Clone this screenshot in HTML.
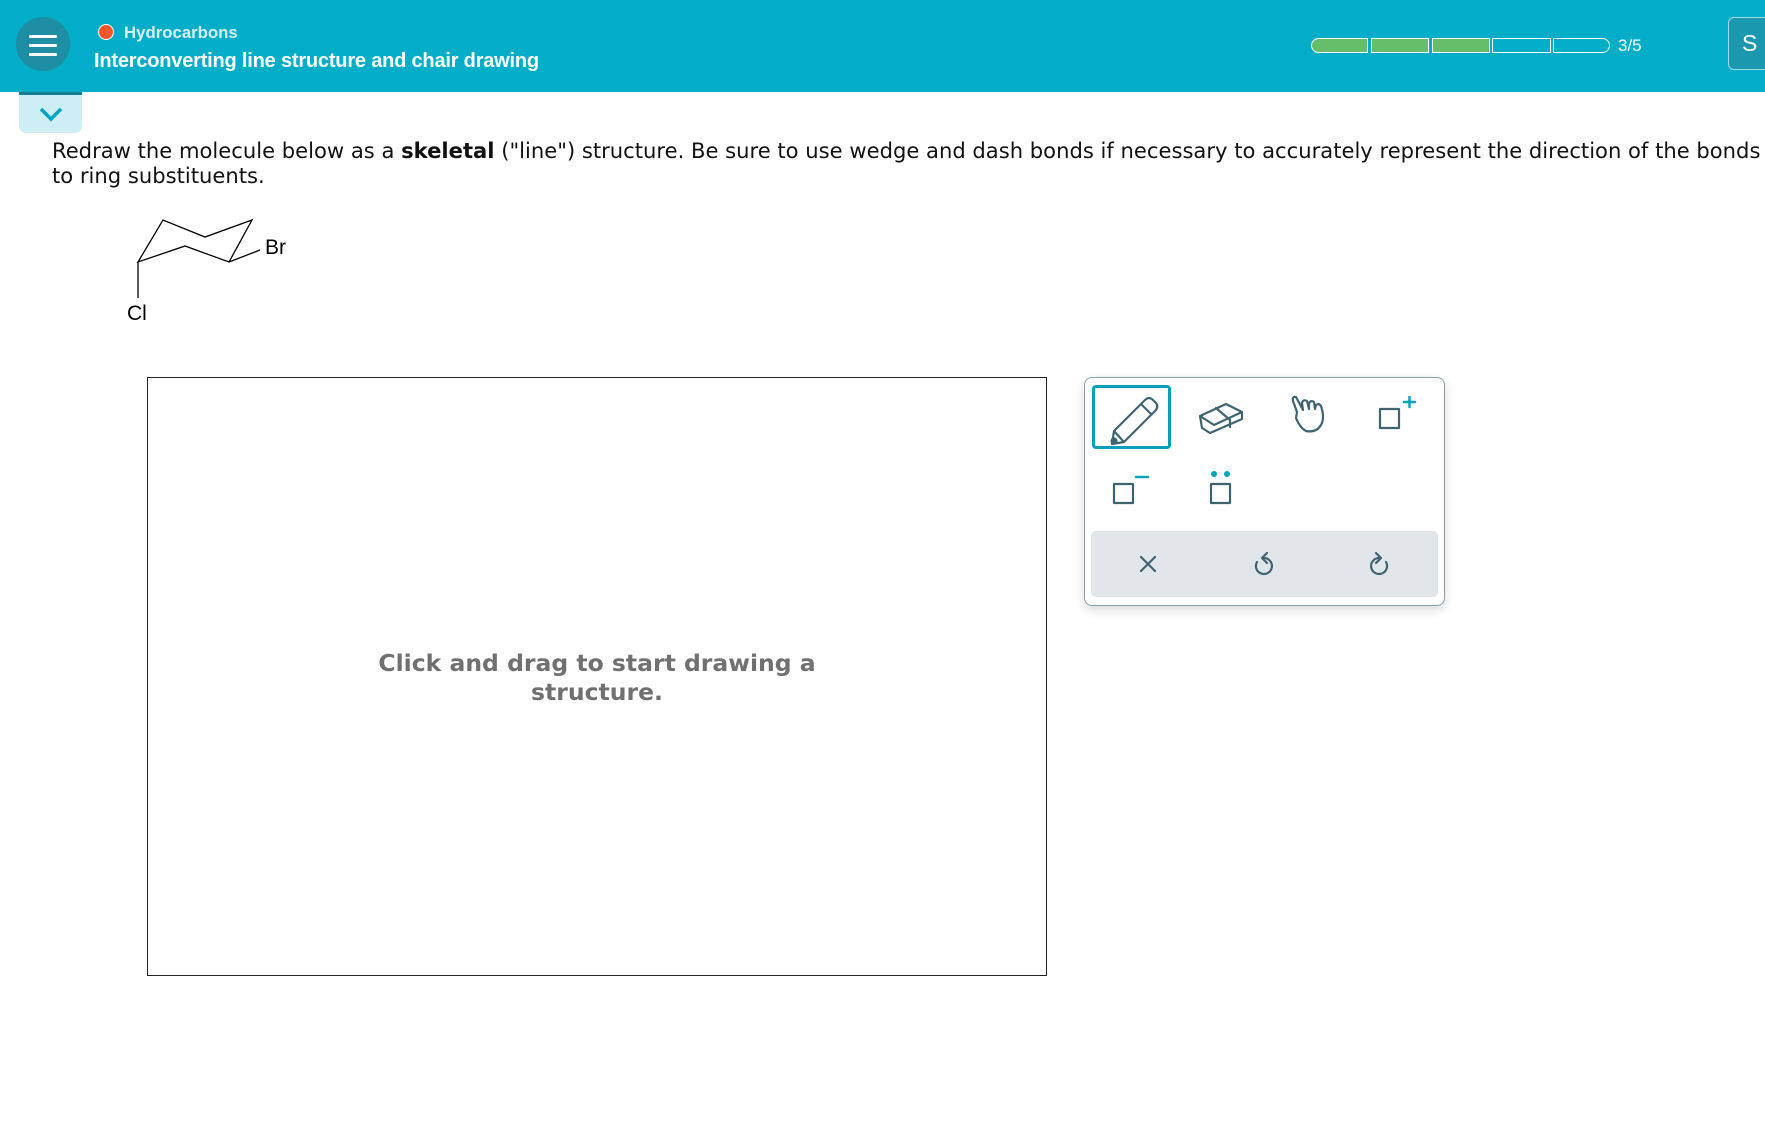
<!DOCTYPE html>
<html><head><meta charset="utf-8"><style>
*{margin:0;padding:0;box-sizing:border-box}
body{width:1765px;height:1140px;background:#fff;position:relative;overflow:hidden;font-family:"Liberation Sans",sans-serif}
.hdr{position:absolute;left:0;top:0;width:1765px;height:92px;background:#02adc8}
.abs{position:absolute}
.seg{position:absolute;top:38px;height:15px;border:1.5px solid #fff}
</style></head><body>
<div class="hdr"></div>
<div class="abs" style="left:16px;top:17px;width:54px;height:54px;border-radius:50%;background:#1d8ea4"></div>
<div class="abs" style="left:29px;top:35px;width:28px;height:3px;background:#fff;border-radius:1px"></div>
<div class="abs" style="left:29px;top:44px;width:28px;height:3px;background:#fff;border-radius:1px"></div>
<div class="abs" style="left:29px;top:53px;width:28px;height:3px;background:#fff;border-radius:1px"></div>
<div class="abs" style="left:98px;top:24px;width:16px;height:16px;border-radius:50%;background:#f4562b;border:1.5px solid #fff"></div>
<div class="abs" style="left:124px;top:23px;font-size:16.8px;font-weight:bold;color:#d6f1f6">Hydrocarbons</div>
<div class="abs" style="left:94px;top:50px;font-size:20px;font-weight:bold;color:#fff;letter-spacing:-0.2px">Interconverting line structure and chair drawing</div>
<div class="seg" style="left:1311px;width:57px;background:#66be6a;border-radius:8px 0 0 8px"></div>
<div class="seg" style="left:1371px;width:58px;background:#66be6a"></div>
<div class="seg" style="left:1432px;width:58px;background:#66be6a"></div>
<div class="seg" style="left:1492px;width:59px"></div>
<div class="seg" style="left:1553px;width:57px;border-radius:0 8px 8px 0"></div>
<div class="abs" style="left:1618px;top:36px;font-size:17px;color:#fff">3/5</div>
<div class="abs" style="left:1728px;top:17px;width:60px;height:53px;border:1.5px solid #9fdbe6;border-radius:6px;background:#1b98ae;color:#fff;font-size:23px;padding:12px 0 0 13px">S</div>
<div class="abs" style="left:19px;top:92px;width:63px;height:41px;background:#cdeef4;border-top:3px solid #177d90;border-radius:0 0 7px 7px"></div>
<svg class="abs" style="left:38px;top:105px" width="26" height="18"><path d="M3 4 L13 14 L23 4" stroke="#02a4bf" stroke-width="3.5" fill="none"/></svg>
<div class="abs" style="left:52px;top:138px;font-family:'DejaVu Sans',sans-serif;font-size:21.1px;line-height:25px;color:#111;width:1720px;white-space:nowrap">Redraw the molecule below as a <b>skeletal</b> ("line") structure. Be sure to use wedge and dash bonds if necessary to accurately represent the direction of the bonds<br>to ring substituents.</div>
<svg class="abs" style="left:0;top:0" width="320" height="380">
<path d="M138 262 L163 220 L205 237 L252 220 L229 262 L185 246 Z M138 262 L138 298 M229 262 L260 250" stroke="#000" stroke-width="1.3" fill="none"/>
<text x="265" y="254" font-family="Liberation Sans" font-size="21">Br</text>
<text x="127" y="320" font-family="Liberation Sans" font-size="21">Cl</text>
</svg>
<div class="abs" style="left:147px;top:377px;width:900px;height:599px;border:1.3px solid #222"></div>
<div class="abs" style="left:297px;top:649px;width:600px;text-align:center;font-family:'DejaVu Sans',sans-serif;font-weight:bold;font-size:23.5px;line-height:29px;color:#707070">Click and drag to start drawing a<br>structure.</div>
<div class="abs" style="left:1084px;top:377px;width:361px;height:229px;border:1.3px solid #8aa0a8;border-radius:8px;box-shadow:0 4px 10px rgba(0,0,0,0.15);background:#fff"></div>
<div class="abs" style="left:1092px;top:385px;width:79px;height:64px;border:3px solid #0a9fb8;border-radius:4px"></div>
<div class="abs" style="left:1091px;top:531px;width:347px;height:66px;background:#e0e6e9;border-radius:5px"></div>
<svg class="abs" style="left:0;top:0" width="1765" height="1140" fill="none" stroke="#3f6470" stroke-width="2.2" stroke-linejoin="round" stroke-linecap="round">
<path d="M1114 431 L1145 400 Q1149 396 1153 400 L1156 403 Q1159 407 1155 411 L1124 442 L1112 444 Z M1141 404 L1151 414 M1114 431 L1124 442"/>
<circle cx="1114" cy="441" r="2.5" fill="#3f6470"/>
<path d="M1200 416 L1226 404 L1242 412 L1242 419 L1210 433 L1202 428 Z M1216 408 L1230 420 L1230 427 M1200 416 L1214 425 L1242 412"/>
<path d="M1297 412 L1293 401 Q1292 396 1296 397 L1303 410 L1302 403 Q1303 399 1307 401 L1309 409 L1309 403 Q1311 400 1314 402 L1315 409 L1316 405 Q1319 403 1321 406 Q1325 418 1321 425 Q1316 433 1306 431 Q1300 428 1296 418 Z"/>
<rect x="1380" y="409" width="19" height="19"/>
<path d="M1404 402 L1415 402 M1409.5 397 L1409.5 407" stroke="#02a4bf" stroke-width="2.5"/>
<rect x="1114" y="484" width="19" height="19"/>
<path d="M1136 477 L1148 477" stroke="#02a4bf" stroke-width="2.5"/>
<rect x="1211" y="484" width="19" height="19"/>
<circle cx="1214" cy="474" r="3" fill="#02a4bf" stroke="none"/>
<circle cx="1227" cy="474" r="3" fill="#02a4bf" stroke="none"/>
<path d="M1141 557 L1155 571 M1155 557 L1141 571"/>
<path d="M1264 558 A8 8 0 1 1 1257 562 M1267 553 L1262 558 L1267 563"/>
<path d="M1379 558 A8 8 0 1 0 1386 562 M1376 553 L1381 558 L1376 563"/>
</svg>
</body></html>
